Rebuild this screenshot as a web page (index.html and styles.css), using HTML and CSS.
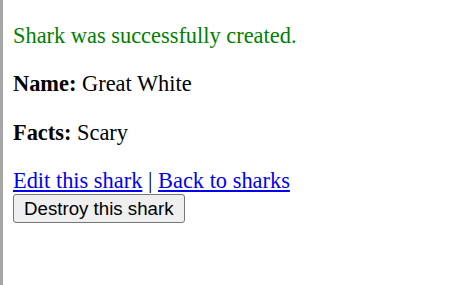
FILE: index.html
```html
<!DOCTYPE html>
<html>
<head>
<meta charset="utf-8">
<title>Shark</title>
<link rel="stylesheet" href="styles.css">
</head>
<body>
<p class="notice">Shark was successfully created.</p>
<div class="shark">
  <p><strong>Name:</strong> Great White</p>
  <p><strong>Facts:</strong> Scary</p>
</div>
<div class="actions">
  <a href="#">Edit this shark</a> |
  <a href="#">Back to sharks</a>
  <form class="button_to">
    <button type="button" class="destroy">Destroy this shark</button>
  </form>
</div>
</body>
</html>
```
FILE: styles.css
```css
html {
  min-height: 100%;
  border-left: 3px solid #a6a6a6;
  box-sizing: border-box;
}
body {
  margin: 0;
  padding: 0 0 0 10px;
  font-family: "Liberation Serif", "Times New Roman", serif;
  font-size: 22.4px;
  color: #000;
  background: #fff;
}
p {
  margin: 22.5px 0;
}
.notice {
  color: #008000;
}
a {
  color: #0000ee;
}
.button_to {
  margin: 0;
}
.destroy {
  font-family: "Liberation Sans", Arial, sans-serif;
  font-size: 18.7px;
  padding: 2.5px 10px;
  border: 1px solid #767676;
  border-radius: 3px;
  background: #efefef;
  color: #000;
}
```
